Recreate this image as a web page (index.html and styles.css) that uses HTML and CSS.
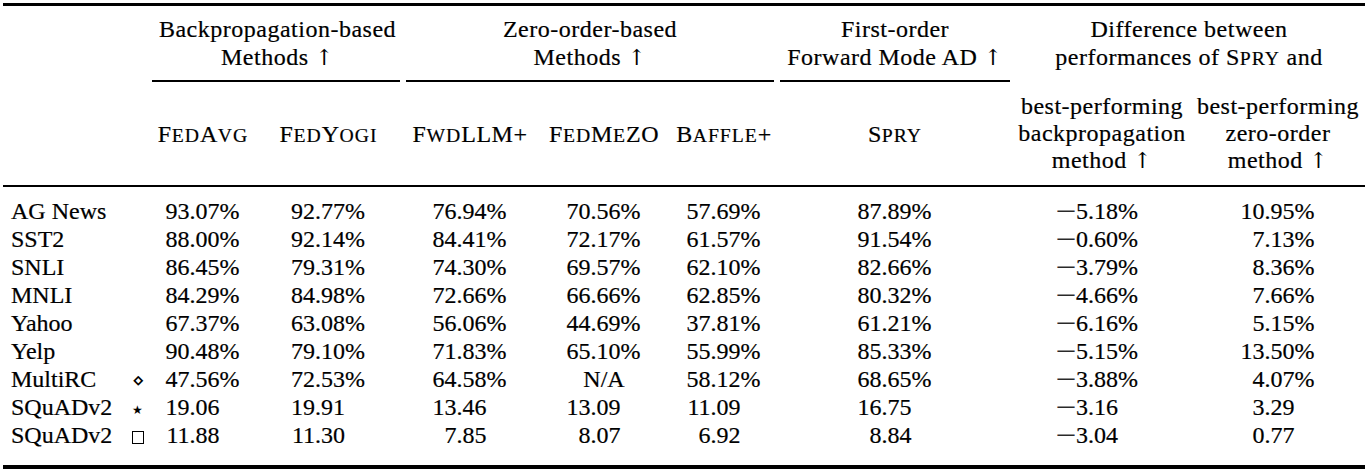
FILE: index.html
```html
<!DOCTYPE html>
<html lang="en">
<head>
<meta charset="utf-8">
<title>Results table</title>
<link rel="stylesheet" href="styles.css">
</head>
<body>
<table class="tbl">
  <colgroup>
    <col class="c0"><col class="c1"><col class="c2"><col class="c3"><col class="c4"><col class="c5"><col class="c6"><col class="c7"><col class="c8">
  </colgroup>
  <thead>
    <tr class="r1">
      <th></th>
      <th colspan="2"><div class="gt">Backpropagation-based<br>Methods <span class="ar">↑</span></div><div class="cmid cmid-first"></div></th>
      <th colspan="3"><div class="gt">Zero-order-based<br>Methods <span class="ar">↑</span></div><div class="cmid"></div></th>
      <th><div class="gt">First-order<br>Forward Mode AD <span class="ar">↑</span></div><div class="cmid"></div></th>
      <th colspan="2"><div class="gt">Difference between<br>performances of S<span class="sc">pry</span> and</div></th>
    </tr>
    <tr class="r2">
      <th><div class="hc"></div></th>
      <th><div class="hc"><div>F<span class="sc">ed</span>A<span class="sc">vg</span></div></div></th>
      <th><div class="hc"><div>F<span class="sc">ed</span>Y<span class="sc">ogi</span></div></div></th>
      <th><div class="hc"><div>F<span class="sc">wd</span>LLM+</div></div></th>
      <th><div class="hc"><div>F<span class="sc">ed</span>M<span class="sc">e</span>ZO</div></div></th>
      <th><div class="hc"><div>B<span class="sc">affle</span>+</div></div></th>
      <th><div class="hc"><div>S<span class="sc">pry</span></div></div></th>
      <th><div class="hc multi"><div>best-performing<br>backpropagation<br>method <span class="ar">↑</span></div></div></th>
      <th><div class="hc multi"><div>best-performing<br>zero-order<br>method <span class="ar">↑</span></div></div></th>
    </tr>
  </thead>
  <tbody>
    <tr class="first">
      <td class="lab">AG News</td>
      <td><span class="n"><span class="i">93</span>.07%</span></td>
      <td><span class="n"><span class="i">92</span>.77%</span></td>
      <td><span class="n"><span class="i">76</span>.94%</span></td>
      <td><span class="n"><span class="i">70</span>.56%</span></td>
      <td><span class="n"><span class="i">57</span>.69%</span></td>
      <td><span class="n"><span class="i">87</span>.89%</span></td>
      <td class="dcol"><span class="n nd"><span class="i"><span class="m">−</span>5</span>.18%</span></td>
      <td><span class="n"><span class="i">10</span>.95%</span></td>
    </tr>
    <tr>
      <td class="lab">SST2</td>
      <td><span class="n"><span class="i">88</span>.00%</span></td>
      <td><span class="n"><span class="i">92</span>.14%</span></td>
      <td><span class="n"><span class="i">84</span>.41%</span></td>
      <td><span class="n"><span class="i">72</span>.17%</span></td>
      <td><span class="n"><span class="i">61</span>.57%</span></td>
      <td><span class="n"><span class="i">91</span>.54%</span></td>
      <td class="dcol"><span class="n nd"><span class="i"><span class="m">−</span>0</span>.60%</span></td>
      <td><span class="n"><span class="i">7</span>.13%</span></td>
    </tr>
    <tr>
      <td class="lab">SNLI</td>
      <td><span class="n"><span class="i">86</span>.45%</span></td>
      <td><span class="n"><span class="i">79</span>.31%</span></td>
      <td><span class="n"><span class="i">74</span>.30%</span></td>
      <td><span class="n"><span class="i">69</span>.57%</span></td>
      <td><span class="n"><span class="i">62</span>.10%</span></td>
      <td><span class="n"><span class="i">82</span>.66%</span></td>
      <td class="dcol"><span class="n nd"><span class="i"><span class="m">−</span>3</span>.79%</span></td>
      <td><span class="n"><span class="i">8</span>.36%</span></td>
    </tr>
    <tr>
      <td class="lab">MNLI</td>
      <td><span class="n"><span class="i">84</span>.29%</span></td>
      <td><span class="n"><span class="i">84</span>.98%</span></td>
      <td><span class="n"><span class="i">72</span>.66%</span></td>
      <td><span class="n"><span class="i">66</span>.66%</span></td>
      <td><span class="n"><span class="i">62</span>.85%</span></td>
      <td><span class="n"><span class="i">80</span>.32%</span></td>
      <td class="dcol"><span class="n nd"><span class="i"><span class="m">−</span>4</span>.66%</span></td>
      <td><span class="n"><span class="i">7</span>.66%</span></td>
    </tr>
    <tr>
      <td class="lab">Yahoo</td>
      <td><span class="n"><span class="i">67</span>.37%</span></td>
      <td><span class="n"><span class="i">63</span>.08%</span></td>
      <td><span class="n"><span class="i">56</span>.06%</span></td>
      <td><span class="n"><span class="i">44</span>.69%</span></td>
      <td><span class="n"><span class="i">37</span>.81%</span></td>
      <td><span class="n"><span class="i">61</span>.21%</span></td>
      <td class="dcol"><span class="n nd"><span class="i"><span class="m">−</span>6</span>.16%</span></td>
      <td><span class="n"><span class="i">5</span>.15%</span></td>
    </tr>
    <tr>
      <td class="lab">Yelp</td>
      <td><span class="n"><span class="i">90</span>.48%</span></td>
      <td><span class="n"><span class="i">79</span>.10%</span></td>
      <td><span class="n"><span class="i">71</span>.83%</span></td>
      <td><span class="n"><span class="i">65</span>.10%</span></td>
      <td><span class="n"><span class="i">55</span>.99%</span></td>
      <td><span class="n"><span class="i">85</span>.33%</span></td>
      <td class="dcol"><span class="n nd"><span class="i"><span class="m">−</span>5</span>.15%</span></td>
      <td><span class="n"><span class="i">13</span>.50%</span></td>
    </tr>
    <tr>
      <td class="lab"><span class="lt">MultiRC</span><span class="sym dia">⋄</span></td>
      <td><span class="n"><span class="i">47</span>.56%</span></td>
      <td><span class="n"><span class="i">72</span>.53%</span></td>
      <td><span class="n"><span class="i">64</span>.58%</span></td>
      <td>N/A</td>
      <td><span class="n"><span class="i">58</span>.12%</span></td>
      <td><span class="n"><span class="i">68</span>.65%</span></td>
      <td class="dcol"><span class="n nd"><span class="i"><span class="m">−</span>3</span>.88%</span></td>
      <td><span class="n"><span class="i">4</span>.07%</span></td>
    </tr>
    <tr>
      <td class="lab"><span class="lt">SQuADv2</span><span class="sym star">★</span></td>
      <td><span class="n"><span class="i">19</span>.06</span></td>
      <td><span class="n"><span class="i">19</span>.91</span></td>
      <td><span class="n"><span class="i">13</span>.46</span></td>
      <td><span class="n"><span class="i">13</span>.09</span></td>
      <td><span class="n"><span class="i">11</span>.09</span></td>
      <td><span class="n"><span class="i">16</span>.75</span></td>
      <td class="dcol"><span class="n nd"><span class="i"><span class="m">−</span>3</span>.16</span></td>
      <td><span class="n"><span class="i">3</span>.29</span></td>
    </tr>
    <tr class="last">
      <td class="lab"><span class="lt">SQuADv2</span><span class="box"></span></td>
      <td><span class="n"><span class="i">11</span>.88</span></td>
      <td><span class="n"><span class="i">11</span>.30</span></td>
      <td><span class="n"><span class="i">7</span>.85</span></td>
      <td><span class="n"><span class="i">8</span>.07</span></td>
      <td><span class="n"><span class="i">6</span>.92</span></td>
      <td><span class="n"><span class="i">8</span>.84</span></td>
      <td class="dcol"><span class="n nd"><span class="i"><span class="m">−</span>3</span>.04</span></td>
      <td><span class="n"><span class="i">0</span>.77</span></td>
    </tr>
  </tbody>
</table>
</body>
</html>
```

FILE: styles.css
```css
html, body {
  margin: 0;
  padding: 0;
  background: #fff;
}

body {
  font-family: "Liberation Serif", "Times New Roman", serif;
  font-size: 24px;
  color: #000;
  -webkit-text-stroke: 0.2px #000;
}

.tbl {
  margin: 3px 0 0 3px;
  width: 1362px;
  table-layout: fixed;
  border-collapse: separate;
  border-spacing: 0;
  border-top: 3px solid #000;
  border-bottom: 4px solid #000;
}

.c0 { width: 149px; }
.c1 { width: 102px; }
.c2 { width: 149px; }
.c3 { width: 134px; }
.c4 { width: 134px; }
.c5 { width: 106px; }
.c6 { width: 236px; }
.c7 { width: 178px; }
.c8 { width: 174px; }

.tbl th,
.tbl td {
  padding: 0;
  font-weight: normal;
  text-align: center;
  white-space: nowrap;
  line-height: 28px;
}

.tbl th {
  letter-spacing: 0.5px;
}

.r1 th {
  vertical-align: top;
  padding-top: 8.5px;
}

.gt {
  padding-bottom: 9.5px;
}

.cmid {
  height: 2px;
  background: #000;
  margin: 0 3px;
}

.cmid-first {
  margin-left: 0;
}

.r2 th {
  border-bottom: 2px solid #000;
}

.hc {
  height: 103px;
  display: flex;
  align-items: center;
  justify-content: center;
}

.hc.multi {
  line-height: 27px;
}

.sc {
  font-size: 0.82em;
  text-transform: uppercase;
  letter-spacing: 1px;
  line-height: 1;
}

.ar {
  font-family: "DejaVu Serif", serif;
  font-size: 22px;
  line-height: 1;
  -webkit-text-stroke: 0;
}

td.lab {
  text-align: left;
  padding-left: 8px;
}

.lt {
  display: inline-block;
  width: 121px;
}

td.dcol {
  padding-right: 10px;
}

.first td {
  padding-top: 10px;
}

.last td {
  padding-bottom: 16px;
}

.n {
  display: inline-block;
  width: 75px;
  text-align: left;
}

.n .i {
  display: inline-block;
  width: 24px;
  text-align: right;
}

.n.nd {
  width: 82px;
}

.n.nd .i {
  width: 32px;
}

.m {
  display: inline-block;
  width: 20px;
  text-align: left;
  transform: scaleX(1.5);
  transform-origin: 0 50%;
}

.sym {
  font-family: "DejaVu Sans", sans-serif;
  line-height: 1;
  -webkit-text-stroke: 0;
}

.dia {
  font-size: 20px;
}

.star {
  font-size: 12px;
  vertical-align: 1px;
}

.box {
  display: inline-block;
  width: 12px;
  height: 13px;
  border: 1.4px solid #000;
  vertical-align: -1px;
  box-sizing: border-box;
}
```
